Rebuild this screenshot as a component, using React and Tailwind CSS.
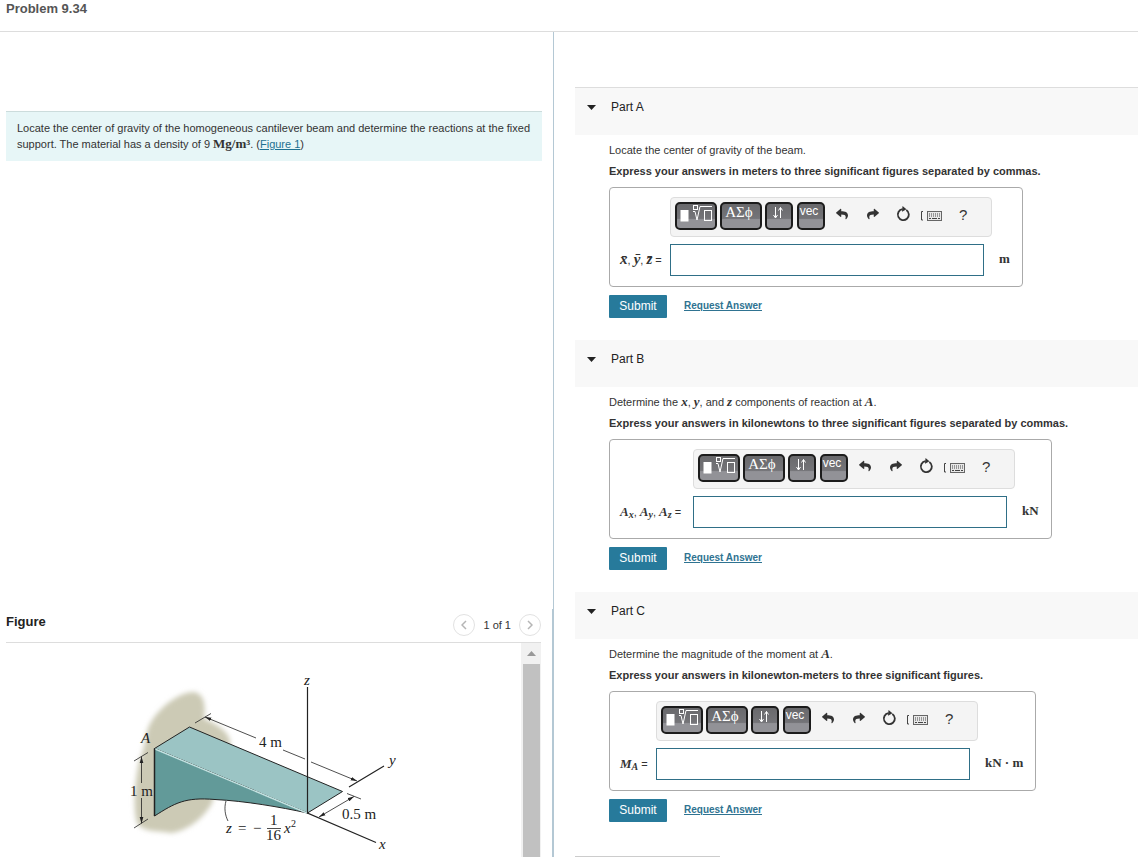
import React, { useState } from "react";
import { FaReply, FaShare } from "react-icons/fa";

const Sym = ({ children, className = "text-[13px]" }) => (
  <i className={`font-['Liberation_Serif',serif] font-bold leading-none ${className}`}>
    {children}
  </i>
);

const Big = ({ children }) => <Sym className="text-[15px]">{children}</Sym>;

const Sub = ({ children }) => (
  <sub className="text-[10px] leading-none">{children}</sub>
);

const parts = [
  {
    id: "A",
    text: "Locate the center of gravity of the beam.",
    hint: "Express your answers in meters to three significant figures separated by commas.",
    label: (
      <>
        <Big>x̄</Big>, <Big>ȳ</Big>, <Big>z̄</Big> =
      </>
    ),
    labelWidth: "w-[60px]",
    unit: "m",
  },
  {
    id: "B",
    text: (
      <>
        Determine the <Sym>x</Sym>, <Sym>y</Sym>, and <Sym>z</Sym> components of
        reaction at <Sym>A</Sym>.
      </>
    ),
    hint: "Express your answers in kilonewtons to three significant figures separated by commas.",
    label: (
      <>
        <Sym>A<Sub>x</Sub></Sym>, <Sym>A<Sub>y</Sub></Sym>, <Sym>A<Sub>z</Sub></Sym> =
      </>
    ),
    labelWidth: "w-[83px]",
    unit: "kN",
  },
  {
    id: "C",
    text: (
      <>
        Determine the magnitude of the moment at <Sym>A</Sym>.
      </>
    ),
    hint: "Express your answers in kilonewton-meters to three significant figures.",
    label: (
      <>
        <Sym>M<Sub>A</Sub></Sym> =
      </>
    ),
    labelWidth: "w-[46px]",
    unit: "kN · m",
  },
];

const darkButton =
  "flex h-7 items-start justify-center rounded-[5px] border-2 border-[#1c1c1c] bg-linear-to-b from-[#69696c] from-0% via-[#747478] via-60% to-[#929297] to-65% text-white";

const TemplateIcon = () => (
  <svg width="34" height="20" viewBox="0 0 34 20" fill="none" stroke="#fff">
    <rect x="1.500" y="6" width="8" height="11.500" fill="#fff" stroke="none" />
    <rect x="14.500" y="1.500" width="4" height="4" />
    <path d="M14 7.500h2L18 16l3-13.500H33" />
    <rect x="25.500" y="6.500" width="7" height="10" />
  </svg>
);

const ResetIcon = () => (
  <svg width="16" height="16" viewBox="0 0 16 16" fill="none">
    <path d="M11.300 4A5.500 5.500 0 1 1 7.500 3.200" stroke="#333" strokeWidth="1.800" />
    <path d="M7.500 0l4 3.200-4.500 2.500z" fill="#333" />
  </svg>
);

const KeyboardIcon = () => (
  <svg width="22" height="12" viewBox="0 0 22 12" fill="none" stroke="#444">
    <path d="M3 1.500H1.500v8.500H3" />
    <rect x="7.500" y="1.500" width="14" height="9" fill="#e8e8e8" stroke="#666" />
    <path d="M9 4h11M9 6h11" strokeDasharray="1 1" />
    <path d="M9 8.500h2M12 8.500h5M18 8.500h2" />
  </svg>
);

const Toolbar = () => (
  <div className="flex h-10 w-[322px] items-start rounded-[4px] border border-[#ddd] bg-[#f4f4f4] px-1 pt-1 text-[#333]">
    <div className="flex gap-[3px]">
      <button type="button" aria-label="Templates" className={`${darkButton} w-[42px]`}>
        <TemplateIcon />
      </button>
      <button
        type="button"
        className={`${darkButton} w-[42px] pr-1 font-['Liberation_Serif',serif] text-[15px] leading-4`}
      >
        ΑΣϕ
      </button>
      <button type="button" aria-label="Arrows" className={`${darkButton} w-7 pr-[3px] pt-[3px]`}>
        <svg width="12" height="12" viewBox="0 0 12 12" fill="none" stroke="#fff">
          <path d="M3.500 0v10.500M1.500 8l2 3 2-3M8.500 11V.5M6.500 3.500l2-3 2 3" />
        </svg>
      </button>
      <button
        type="button"
        className={`${darkButton} ml-px w-7 pr-1 font-['Liberation_Sans',sans-serif] text-[12px] leading-[15px]`}
      >
        vec
      </button>
    </div>
    <div className="ml-[11px] flex h-6 items-center">
      <button type="button" aria-label="Undo">
        <FaReply size={12} />
      </button>
      <button type="button" aria-label="Redo" className="ml-[19px]">
        <FaShare size={12} />
      </button>
      <button type="button" aria-label="Reset" className="ml-4">
        <ResetIcon />
      </button>
      <button type="button" aria-label="Keyboard shortcuts" className="ml-[9px] pt-1">
        <KeyboardIcon />
      </button>
      <button type="button" className="ml-[17px] text-[15px] leading-none">
        ?
      </button>
    </div>
  </div>
);

const Part = ({ part }) => {
  const [answer, setAnswer] = useState("");

  return (
    <section className="mb-[22px]">
      <h2 className="flex h-[47px] items-start bg-[#f8f8f8] pl-3 pt-[11px] text-[12px] font-normal leading-4 text-[#222]">
        <button type="button" className="flex items-center gap-[15px]">
          <svg width="9" height="5" viewBox="0 0 9 5" fill="#222">
            <path d="M0 0h9L4.500 5z" />
          </svg>
          Part {part.id}
        </button>
      </h2>
      <div className="pl-[34px]">
        <p className="pt-[7px] leading-4">{part.text}</p>
        <p className="mb-2 mt-[5px] font-bold leading-4">{part.hint}</p>
        <div className="inline-grid h-[100px] grid-cols-[auto_auto_auto] content-start rounded-[4px] border border-[#aaa] pr-3 pt-[9px]">
          <div className="col-start-2">
            <Toolbar />
          </div>
          <label
            htmlFor={`answer-${part.id}`}
            className={`col-start-1 row-start-2 mt-[7px] flex h-8 items-center whitespace-nowrap pl-[10px] ${part.labelWidth}`}
          >
            <span>{part.label}</span>
          </label>
          <input
            id={`answer-${part.id}`}
            type="text"
            value={answer}
            onChange={(e) => setAnswer(e.target.value)}
            className="row-start-2 mt-[7px] h-8 w-[314px] border border-[#2f6f87] bg-white px-2 outline-none"
          />
          <span className="row-start-2 mt-[7px] flex h-8 items-center pl-[7px] pb-[2px] font-['Liberation_Serif',serif] text-[13px] font-bold">
            {part.unit}
          </span>
        </div>
        <div className="mt-2 flex items-center gap-[17px]">
          <button
            type="submit"
            className="h-[23px] w-[58px] rounded-[1px] bg-[#277a9b] pb-[2px] text-[12px] text-white"
          >
            Submit
          </button>
          <a href="#request" className="pb-[2px] text-[10px] font-bold text-[#2f7391] underline">
            Request Answer
          </a>
        </div>
      </div>
    </section>
  );
};

const BeamFigure = () => (
  <svg
    className="h-[214px] w-full"
    viewBox="6 643 515 214"
    preserveAspectRatio="xMinYMin"
    fill="none"
    stroke="#222"
    role="img"
    aria-label="Cantilever beam fixed at A"
  >
    <defs>
      <filter id="soft" x="-20%" y="-20%" width="140%" height="140%">
        <feGaussianBlur stdDeviation="2.500" />
      </filter>
      <marker id="arrow" viewBox="0 0 6 4" refX="6" refY="2" markerWidth="8" markerHeight="6" orient="auto-start-reverse">
        <path d="M0 .3L6 2 0 3.700z" fill="#222" stroke="none" />
      </marker>
    </defs>

    {/* wall */}
    <path
      d="M146 738C147 716 176 692 194 692C204 694 206 704 204 719C218 724 232 734 230 745L212 803C204 818 188 830 172 833C158 831 142 832 137 823C132 806 136 776 139 762C143 752 144 746 146 738Z"
      fill="#cccab5"
      stroke="none"
      filter="url(#soft)"
    />

    {/* beam */}
    <path d="M154.500 748.500L189.500 727L342.500 791.500L307.500 813Z" fill="#9bc4c4" />
    <path
      d="M154.500 748.500L307.500 813C280 807 245 801 215 799.500C185 797 175 803 154.500 816Z"
      fill="#629a99"
    />
    <path d="M155 749L307 813" stroke="#c3e3e2" strokeWidth="1.500" />
    <path d="M154.500 748.500V816" strokeWidth="1.500" />

    {/* axes */}
    <path d="M307.500 687V813L376 842.500M349 787L384 766" strokeWidth="1.200" />

    {/* dimensions */}
    <g strokeWidth=".8">
      <path d="M195 723L211 713.500M134 761L148 752.500M134 828L148 819M347 793.500L361 799" />
      <path d="M256 738L205 717" markerEnd="url(#arrow)" />
      <path d="M283 750L305 759" />
      <path d="M311 762L357 781" markerEnd="url(#arrow)" />
      <path d="M354 796.500L319 817" markerStart="url(#arrow)" markerEnd="url(#arrow)" />
      <path d="M141.500 783V756.500" markerEnd="url(#arrow)" />
      <path d="M141.500 798V823.500" markerEnd="url(#arrow)" />
      <path d="M226 801C224 808 225 815 228 821" />
      <path d="M267 828.500H281" />
    </g>

    <g fill="#222" stroke="none" className="font-['Liberation_Serif',serif] text-[15px]">
      <text x="259" y="747">4 m</text>
      <text x="130" y="796">1 m</text>
      <text x="342" y="819">0.5 m</text>
      <text x="141" y="743" fontStyle="italic">A</text>
      <text x="304" y="685" fontStyle="italic">z</text>
      <text x="389" y="765" fontStyle="italic">y</text>
      <text x="379" y="849" fontStyle="italic">x</text>
      <text x="226" y="833" fontStyle="italic">z</text>
      <text x="238" y="833">=</text>
      <text x="253" y="833">−</text>
      <text x="270" y="825">1</text>
      <text x="266" y="840">16</text>
      <text x="284" y="833" fontStyle="italic">x</text>
      <text x="291" y="827" className="text-[10px]">2</text>
    </g>
  </svg>
);

const pagerButton =
  "flex size-[22px] items-center justify-center rounded-full border border-[#e2e2e2] text-[#b5b5b5]";

const FigurePanel = () => (
  <section className="mt-auto border-r border-[#b4c8d4] pl-[6px] pr-[11px]">
    <div className="flex h-[34px] items-start justify-between border-b border-[#ddd]">
      <h2 className="pt-[5px] text-[13px] font-bold leading-4 text-[#222]">Figure</h2>
      <div className="flex items-center gap-2 pt-[5px]">
        <button type="button" aria-label="Previous figure" className={pagerButton}>
          <svg width="6" height="10" viewBox="0 0 6 10" fill="none" stroke="currentColor" strokeWidth="1.500">
            <path d="M5 1L1 5l4 4" />
          </svg>
        </button>
        <span>1 of 1</span>
        <button type="button" aria-label="Next figure" className={pagerButton}>
          <svg width="6" height="10" viewBox="0 0 6 10" fill="none" stroke="currentColor" strokeWidth="1.500">
            <path d="M1 1l4 4-4 4" />
          </svg>
        </button>
      </div>
    </div>
    <div className="flex">
      <div className="min-w-0 flex-1">
        <BeamFigure />
      </div>
      <div className="flex w-5 flex-col items-center bg-[#f1f1f1]">
        <div className="flex h-[21px] items-center">
          <svg width="9" height="5" viewBox="0 0 9 5" fill="#999">
            <path d="M0 5h9L4.500 0z" />
          </svg>
        </div>
        <div className="w-[17px] flex-1 bg-[#c1c1c1]" />
      </div>
    </div>
  </section>
);

const App = () => {
  return (
    <div className="flex min-h-screen flex-col bg-white font-['Liberation_Sans',Arial,sans-serif] text-[11px] text-[#333]">
      <header className="h-8 border-b border-[#ddd] pl-[6px] pt-px">
        <h1 className="text-[13px] font-bold leading-4 text-[#555]">Problem 9.34</h1>
      </header>

      <main className="grid flex-1 grid-cols-[554fr_584fr]">
        {/* Problem statement and figure */}
        <div className="flex flex-col border-r border-[#b4c8d4]">
          <p className="ml-[6px] mr-[11px] mt-[79px] border-t border-[#ccdcdc] bg-[#e7f6f7] px-[11px] pb-[9px] pt-2 leading-4">
            Locate the center of gravity of the homogeneous cantilever beam and
            determine the reactions at the fixed support. The material has a
            density of 9{" "}
            <span className="font-['Liberation_Serif',serif] text-[13px] font-bold leading-none">
              Mg/m³
            </span>
            . (
            <a href="#figure" className="text-[#1f7191] underline">
              Figure 1
            </a>
            )
          </p>
          <FigurePanel />
        </div>

        {/* Answer parts */}
        <div className="pl-[21px] pt-[55px]">
          <div className="border-t border-[#ddd]">
            {parts.map((part) => (
              <Part key={part.id} part={part} />
            ))}
          </div>
          <div className="mt-[34px] w-[145px] border-t border-[#ccc]" />
        </div>
      </main>
    </div>
  );
};

export default App;
